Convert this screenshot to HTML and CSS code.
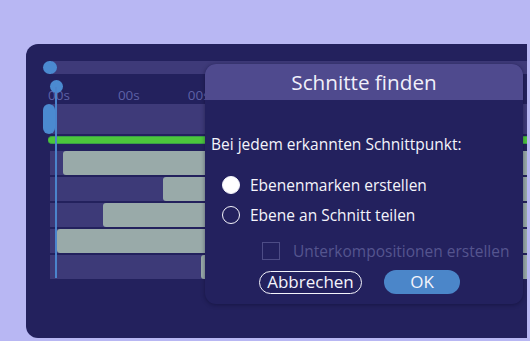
FILE: index.html
```html
<!DOCTYPE html>
<html lang="de">
<head>
<meta charset="utf-8">
<title>Schnitte finden</title>
<link rel="stylesheet" href="styles.css">
</head>
<body>
<div class="page">
  <div class="panel">
    <div class="timeline">
      <div class="scrollbar"></div>
      <div class="ticks">
        <span class="tick">00s</span>
        <span class="tick">00s</span>
        <span class="tick">00s</span>
        <span class="tick">00s</span>
      </div>
      <div class="workarea"></div>
      <div class="greenbar"></div>
      <div class="rows">
        <div class="row"><div class="clip" style="margin-left:13px"></div></div>
        <div class="row"><div class="clip" style="margin-left:113px"></div></div>
        <div class="row"><div class="clip" style="margin-left:53px"></div></div>
        <div class="row"><div class="clip" style="margin-left:7px"></div></div>
        <div class="row"><div class="clip" style="margin-left:151px"></div></div>
      </div>
    </div>

    <div class="scroll-knob"></div>
    <div class="work-handle"></div>
    <div class="playhead"><div class="playhead-knob"></div><div class="playhead-line"></div></div>

    <div class="dialog">
      <div class="dialog-header">Schnitte finden</div>
      <div class="dialog-body">
        <p class="prompt">Bei jedem erkannten Schnittpunkt:</p>
        <div class="option first">
          <span class="radio checked"></span>
          <span class="label">Ebenenmarken erstellen</span>
        </div>
        <div class="option">
          <span class="radio"></span>
          <span class="label">Ebene an Schnitt teilen</span>
        </div>
        <div class="option sub">
          <span class="checkbox"></span>
          <span class="label disabled">Unterkompositionen erstellen</span>
        </div>
        <div class="buttons">
          <span class="btn btn-outline">Abbrechen</span>
          <span class="btn btn-primary">OK</span>
        </div>
      </div>
    </div>
  </div>
</div>
</body>
</html>
```

FILE: styles.css
```css
html, body {
  margin: 0;
  padding: 0;
}
body {
  width: 530px;
  height: 341px;
  overflow: hidden;
  background: #b8b7f3;
  font-family: "Open Sans", "Noto Sans", sans-serif;
}
.page {
  padding: 44px 3px 0 26px;
}
.panel {
  position: relative;
  height: 294px;
  background: #23215d;
  border-radius: 12px 0 0 12px;
  overflow: hidden;
}
.timeline {
  padding: 17px 0 0 22px;
}
.scrollbar {
  height: 13px;
  margin-left: 4px;
  background: #3e3a79;
}
.ticks {
  height: 30px;
  box-sizing: border-box;
  padding-top: 13px;
  display: flex;
  gap: 48px;
  font-size: 13.5px;
  line-height: 16px;
  color: #5d60a6;
}
.workarea {
  height: 30px;
  margin-left: 4px;
  background: #3e3a79;
}
.greenbar {
  height: 8px;
  margin-top: 2px;
  box-sizing: border-box;
  background: #4cc63c;
  border-top: 1px solid #3b9e48;
  border-bottom: 1px solid #3b9e48;
  border-radius: 4px 0 0 4px;
}
.rows {
  margin-top: 7px;
  display: flex;
  flex-direction: column;
  gap: 2px;
  margin-left: 2px;
}
.row {
  height: 24px;
  background: #3d3a78;
  display: flex;
}
.clip {
  flex: 1;
  background: #99aaa9;
  border-radius: 3px 0 0 3px;
}
.scroll-knob {
  position: absolute;
  left: 17px;
  top: 17px;
  width: 14px;
  height: 13px;
  border-radius: 7px;
  background: #4b8ad0;
}
.work-handle {
  position: absolute;
  left: 17px;
  top: 60px;
  width: 12px;
  height: 30px;
  border-radius: 6px;
  background: #4b8ad0;
}
.playhead {
  position: absolute;
  left: 23.5px;
  top: 36px;
  width: 13px;
  height: 198px;
}
.playhead-knob {
  width: 13px;
  height: 13px;
  border-radius: 50%;
  background: #4b8ad0;
}
.playhead-line {
  width: 2px;
  margin: -6px auto 0;
  height: 191px;
  background: #4b84cc;
}
.dialog {
  position: absolute;
  left: 179px;
  top: 20px;
  width: 318px;
  height: 240px;
  background: #23215e;
  border-radius: 11px;
  overflow: hidden;
  box-shadow: 0 1px 4px rgba(10, 8, 40, 0.45);
}
.dialog-header {
  height: 36px;
  background: #4f4a8e;
  color: #f1f0fa;
  font-size: 20.7px;
  line-height: 36px;
  text-align: center;
}
.dialog-body {
  padding-left: 6px;
  color: #f4f4fb;
  font-size: 15.5px;
}
.prompt {
  margin: 34px 0 0;
  line-height: 20px;
}
.option {
  display: flex;
  align-items: center;
  height: 20px;
  margin-top: 10px;
  padding-left: 11px;
  line-height: 20px;
}
.option.first {
  margin-top: 21px;
}
.option.sub {
  margin-top: 16px;
  padding-left: 51px;
}
.radio {
  width: 18px;
  height: 18px;
  box-sizing: border-box;
  border-radius: 50%;
  border: 1.5px solid #f4f4fb;
  margin-right: 10px;
}
.radio.checked {
  background: #ffffff;
}
.checkbox {
  width: 18px;
  height: 18px;
  box-sizing: border-box;
  border: 1.5px solid #4d4c86;
  margin-right: 13px;
}
.label.disabled {
  color: #55558f;
}
.buttons {
  display: flex;
  align-items: center;
  margin-top: 9px;
  padding-left: 48px;
  gap: 22px;
  font-size: 17px;
}
.btn {
  display: flex;
  align-items: center;
  justify-content: center;
  box-sizing: border-box;
  border-radius: 12px;
  line-height: 20px;
}
.btn-outline {
  width: 103px;
  height: 23px;
  border: 1.5px solid #f4f4fb;
}
.btn-primary {
  width: 76px;
  height: 24px;
  background: #4b86c9;
}
```
